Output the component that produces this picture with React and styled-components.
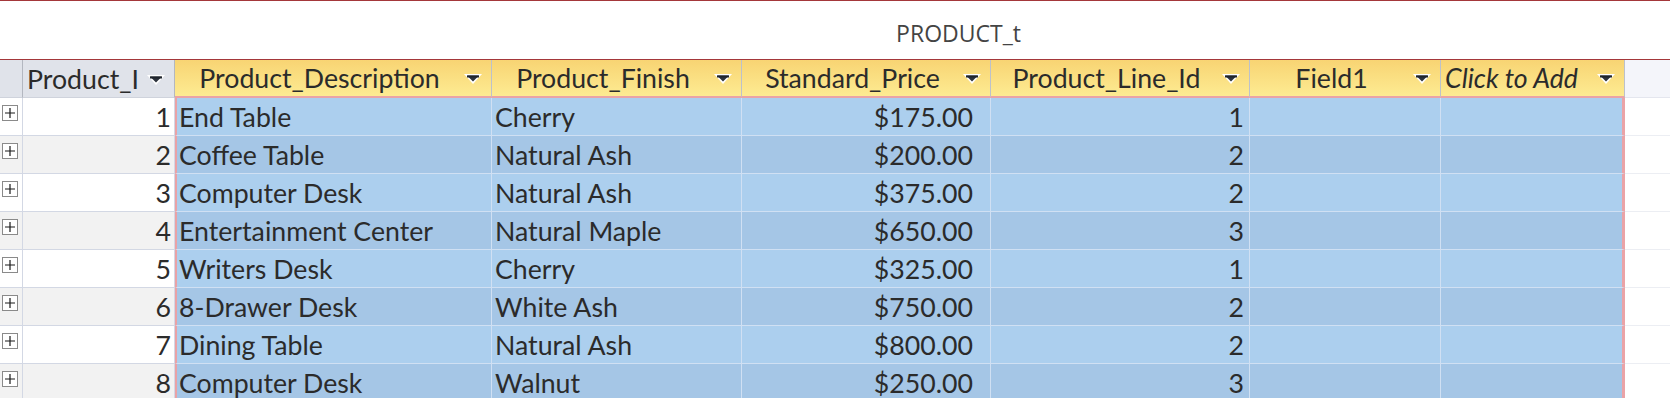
import React from "react";
import styled, { createGlobalStyle, css } from "styled-components";

const COLS = "23px 152px 317px 250px 249px 259px 191px 184px 1fr";

const Global = createGlobalStyle`
  html, body { margin: 0; padding: 0; background: #ffffff; }
  body { font-family: Lato, "Liberation Sans", sans-serif; overflow: hidden; }
`;

const Page = styled.div`
  width: 1670px;
  height: 398px;
  overflow: hidden;
  display: flex;
  flex-direction: column;
  border-top: 1px solid #a4373a;
  box-sizing: border-box;
`;

const TitleBar = styled.div`
  height: 58px;
  flex: none;
  display: flex;
  align-items: center;
  justify-content: center;
  padding-left: 247px;
  padding-top: 6px;
  box-sizing: border-box;
  font-family: "Open Sans", "Noto Sans", sans-serif;
  font-size: 23px;
  color: #444444;
`;

const HeaderRow = styled.div`
  display: grid;
  grid-template-columns: ${COLS};
  height: 38px;
  flex: none;
  border-top: 1px solid #a4373a;
`;

const headerTones = {
  grey: css`
    background: #e0e3ea;
    border-right: 1px solid #b3b7c0;
    border-bottom: 1px solid #cfd3dc;
  `,
  yellow: css`
    background: linear-gradient(#f8d473, #fdeb92);
    border-right: 1px solid #bcc1cb;
    border-bottom: 2px solid #eaa3a6;
  `,
  blank: css`
    background: #f4f5fa;
    border-bottom: 1px solid #e4e6ee;
  `,
};

const HeaderCell = styled.div`
  box-sizing: border-box;
  display: flex;
  align-items: center;
  min-width: 0;
  ${(p) => headerTones[p.$tone]}
`;

const HeaderLabel = styled.div`
  flex: 1;
  min-width: 0;
  overflow: hidden;
  white-space: nowrap;
  padding: 0 4px;
  font-size: 26.7px;
  color: #2b2b2b;
  text-align: ${(p) => p.$align || "center"};
  font-style: ${(p) => (p.$italic ? "italic" : "normal")};
`;

const ArrowSlot = styled.div`
  width: 27px;
  flex: none;
  display: flex;
  justify-content: flex-start;
  align-items: center;
  padding-top: 2px;
`;

const DropArrow = () => (
  <svg width="18" height="10" viewBox="0 0 18 10">
    <polygon points="0,0 18,0 9,10" fill="#ffffff" />
    <polygon points="3,1.5 15,1.5 9,7.5" fill="#2d333d" />
    <rect x="3" y="1.5" width="12" height="2" fill="#1f242c" />
  </svg>
);

const Body = styled.div`
  display: flex;
  flex-direction: column;
`;

const DataRow = styled.div`
  display: grid;
  grid-template-columns: ${COLS};
  height: 38px;
  flex: none;
`;

const BaseCell = styled.div`
  box-sizing: border-box;
  min-width: 0;
  display: flex;
  align-items: center;
  overflow: hidden;
  white-space: nowrap;
  font-size: 26.7px;
  color: #2b2b2b;
`;

const SelectorCell = styled(BaseCell)`
  align-items: flex-start;
  background: ${(p) => (p.$alt ? "#f2f2f2" : "#ffffff")};
  border-right: 1px solid #d3d8e4;
  border-bottom: 1px solid #d3d8e4;
  padding: 7px 0 0 2px;
`;

const IdCell = styled(BaseCell)`
  justify-content: flex-end;
  padding-right: 3px;
  background: ${(p) => (p.$alt ? "#f2f2f2" : "#ffffff")};
  border-right: 1px solid #d3d8e4;
  border-bottom: 1px solid #d3d8e4;
`;

const SelCell = styled(BaseCell)`
  background: ${(p) => (p.$alt ? "#a5c6e6" : "#accfee")};
  border-right: 1px solid #d0e0f3;
  border-bottom: 1px solid #d0e0f3;
  justify-content: ${(p) => (p.$right ? "flex-end" : "flex-start")};
  padding-left: 3px;
  padding-right: ${(p) => (p.$pr != null ? p.$pr : 4)}px;
  ${(p) => p.$first && css`border-left: 2px solid #e9a2a6; padding-left: 2px;`}
  ${(p) => p.$last && css`border-right: 3px solid #eaa3a7;`}
`;

const BlankCell = styled(BaseCell)`
  background: #ffffff;
  border-bottom: 1px solid #eceef3;
`;

const PlusBox = () => (
  <svg width="16" height="16" viewBox="0 0 16 16">
    <rect x="0.5" y="0.5" width="15" height="15" fill="#ffffff" stroke="#8a8a8a" />
    <path d="M3 8 H13 M8 3 V13" stroke="#1a1a1a" strokeWidth="1.2" />
  </svg>
);

const headers = [
  { label: "Product_Description" },
  { label: "Product_Finish" },
  { label: "Standard_Price" },
  { label: "Product_Line_Id" },
  { label: "Field1" },
  { label: "Click to Add", italic: true, align: "left" },
];

const rows = [
  [1, "End Table", "Cherry", "$175.00", 1],
  [2, "Coffee Table", "Natural Ash", "$200.00", 2],
  [3, "Computer Desk", "Natural Ash", "$375.00", 2],
  [4, "Entertainment Center", "Natural Maple", "$650.00", 3],
  [5, "Writers Desk", "Cherry", "$325.00", 1],
  [6, "8-Drawer Desk", "White Ash", "$750.00", 2],
  [7, "Dining Table", "Natural Ash", "$800.00", 2],
  [8, "Computer Desk", "Walnut", "$250.00", 3],
];

export default function App() {
  return (
    <>
      <Global />
      <Page>
        <TitleBar>PRODUCT_t</TitleBar>
        <HeaderRow>
          <HeaderCell $tone="grey" />
          <HeaderCell $tone="grey">
            <HeaderLabel $align="left">Product_I</HeaderLabel>
            <ArrowSlot>
              <DropArrow />
            </ArrowSlot>
          </HeaderCell>
          {headers.map((h) => (
            <HeaderCell key={h.label} $tone="yellow">
              <HeaderLabel $align={h.align} $italic={h.italic}>
                {h.label}
              </HeaderLabel>
              <ArrowSlot>
                <DropArrow />
              </ArrowSlot>
            </HeaderCell>
          ))}
          <HeaderCell $tone="blank" />
        </HeaderRow>
        <Body>
          {rows.map(([id, desc, finish, price, line], i) => {
            const alt = i % 2 === 1;
            return (
              <DataRow key={id}>
                <SelectorCell $alt={alt}>
                  <PlusBox />
                </SelectorCell>
                <IdCell $alt={alt}>{id}</IdCell>
                <SelCell $alt={alt} $first>
                  {desc}
                </SelCell>
                <SelCell $alt={alt}>{finish}</SelCell>
                <SelCell $alt={alt} $right $pr={17}>
                  {price}
                </SelCell>
                <SelCell $alt={alt} $right $pr={5}>
                  {line}
                </SelCell>
                <SelCell $alt={alt} />
                <SelCell $alt={alt} $last />
                <BlankCell />
              </DataRow>
            );
          })}
        </Body>
      </Page>
    </>
  );
}
